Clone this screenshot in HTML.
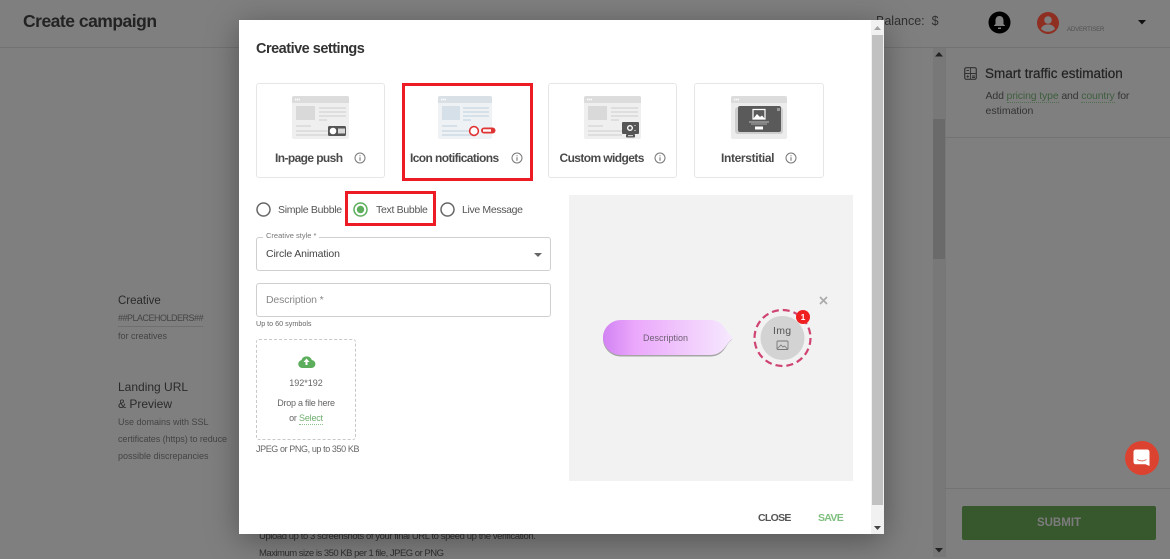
<!DOCTYPE html>
<html><head><meta charset="utf-8">
<style>
html,body{margin:0;padding:0}
body{width:1170px;height:557px;overflow:hidden;position:relative;background:#7f7f7f;font-family:"Liberation Sans",sans-serif;color:#333}
.a{position:absolute;white-space:nowrap;line-height:1}
.card{position:absolute;top:83px;width:127px;height:93px;border:1px solid #e6e6e6;border-radius:3px;background:#fff}
.lab{font-size:12px;font-weight:bold;color:#4a4a4a;letter-spacing:-.6px}
.red{position:absolute;border:3px solid #ed1c24;box-sizing:border-box}
svg{position:absolute;overflow:visible}
</style></head>
<body>
<!-- background page -->
<div class="a" style="left:23px;top:13px;font-size:17.500px;font-weight:bold;color:#232323;letter-spacing:-.5px">Create campaign</div>
<div class="a" style="left:0;top:47px;width:1170px;height:1px;background:#727272"></div>
<div class="a" style="left:876px;top:15px;font-size:12.500px;color:#303030">Balance:&nbsp; $</div>
<svg style="left:988px;top:11px" width="23" height="23" viewBox="0 0 23 23"><circle cx="11.500" cy="11.500" r="11" fill="#000"/><path d="M11.500 5c-2.800 0-4 2-4 4.500v3.500l-1.500 1.500v.5h11v-.5l-1.500-1.500v-3.500c0-2.500-1.200-4.500-4-4.500z" fill="#7f7f7f"/><rect x="10" y="16.500" width="3" height="1.500" fill="#7f7f7f"/></svg>
<svg style="left:1037px;top:12px" width="22" height="22" viewBox="0 0 22 22"><circle cx="11" cy="11" r="11" fill="#8f2f22"/><circle cx="11" cy="8" r="3.800" fill="#7f7f7f"/><path d="M4 17c1-3.500 4-4.500 7-4.500s6 1 7 4.500c-2 2-4.500 2.800-7 2.800s-5-.8-7-2.800z" fill="#7f7f7f"/></svg>
<div class="a" style="left:1067px;top:27px;font-size:6px;color:#505050;letter-spacing:-.1px">ADVERTISER</div>
<svg style="left:1138px;top:20px" width="8" height="5"><path d="M0 0h8L4 4.500z" fill="#111"/></svg>

<div class="a" style="left:933px;top:48px;width:12px;height:509px;background:#787878"></div>
<div class="a" style="left:933px;top:119px;width:12px;height:140px;background:#6a6a6a"></div>
<svg style="left:935px;top:52px" width="8" height="5"><path d="M0 4.500h8L4 0z" fill="#222"/></svg>
<svg style="left:935px;top:548px" width="8" height="5"><path d="M0 0h8L4 4.500z" fill="#222"/></svg>
<div class="a" style="left:945px;top:48px;width:1px;height:509px;background:#777"></div>
<div class="a" style="left:945px;top:137px;width:225px;height:1px;background:#737373"></div>
<div class="a" style="left:945px;top:488px;width:225px;height:1px;background:#737373"></div>

<svg style="left:964px;top:67px" width="13" height="13" viewBox="0 0 13 13"><rect x=".7" y=".7" width="11.600" height="11.600" rx="1.500" fill="none" stroke="#333" stroke-width="1.200"/><path d="M.7 6.500h11.600M6.500.7v11.600M2.500 3.500h2.500M8 9h3M8 10.500h3M2.500 9.500h2.500M3.700 8.200v2.500" stroke="#333" stroke-width=".9" fill="none"/></svg>
<div class="a" style="left:985px;top:66.500px;font-size:13.500px;color:#222;-webkit-text-stroke:.2px #222">Smart traffic estimation</div>
<div class="a" style="left:985.500px;top:90.500px;font-size:10.500px;color:#333;letter-spacing:-.14px">Add <span style="color:#3f5f3f;border-bottom:1px dotted #4f6f4f">pricing type</span> and <span style="color:#3f5f3f;border-bottom:1px dotted #4f6f4f">country</span> for</div>
<div class="a" style="left:985.500px;top:106px;font-size:10.500px;color:#333">estimation</div>

<div class="a" style="left:118px;top:295.500px;font-size:11.500px;color:#2a2a2a">Creative</div>
<div class="a" style="left:118px;top:314px;font-size:9px;color:#444;border-bottom:1px solid #6f6f6f;padding-bottom:3px;letter-spacing:-.5px">##PLACEHOLDERS##</div>
<div class="a" style="left:118px;top:331.500px;font-size:9px;color:#444">for creatives</div>
<div class="a" style="left:118px;top:381px;font-size:12px;color:#2a2a2a">Landing URL</div>
<div class="a" style="left:118px;top:398px;font-size:12px;color:#2a2a2a">&amp; Preview</div>
<div class="a" style="left:118px;top:417.500px;font-size:9px;color:#444">Use domains with SSL</div>
<div class="a" style="left:118px;top:434.500px;font-size:9px;color:#444;letter-spacing:-.07px">certificates (https) to reduce</div>
<div class="a" style="left:118px;top:451.500px;font-size:9px;color:#444">possible discrepancies</div>
<div class="a" style="left:259px;top:532px;font-size:9.500px;color:#2e2e2e;letter-spacing:-.42px">Upload up to 3 screenshots of your final URL to speed up the verification.</div>
<div class="a" style="left:259px;top:549px;font-size:9.500px;color:#2e2e2e;letter-spacing:-.5px">Maximum size is 350 KB per 1 file, JPEG or PNG</div>
<div class="a" style="left:962px;top:506px;width:194px;height:34px;background:#37572d;border-radius:2px;text-align:center;line-height:34px;font-size:11.500px;font-weight:bold;color:#7c7c7c">SUBMIT</div>
<div class="a" style="left:1125px;top:441px;width:34px;height:34px;border-radius:50%;background:#db4330"></div>
<svg style="left:1133px;top:449px" width="18" height="18" viewBox="0 0 18 18"><path d="M3 0.500h11c1.500 0 2.500 1 2.500 2.500v14l-4-1.800H3c-1.500 0-2.500-1-2.500-2.500V3C.5 1.500 1.500.5 3 .5z" fill="#fff"/><path d="M4 10.500c3 1.800 6.500 1.800 9.500 0" stroke="#db6a5c" stroke-width="1" fill="none"/></svg>

<!-- modal shadow + modal -->
<div class="a" style="left:239px;top:20px;width:645px;height:514px;background:#fff;box-shadow:0 6px 30px rgba(0,0,0,.35)"></div>
<div class="a" style="left:871px;top:20px;width:13px;height:514px;background:#f1f1f1"></div>
<div class="a" style="left:872px;top:35px;width:11px;height:470px;background:#c1c1c1"></div>
<svg style="left:874px;top:26px" width="7" height="4"><path d="M0 4h7L3.500 0z" fill="#a3a3a3"/></svg>
<svg style="left:874px;top:526px" width="7" height="4"><path d="M0 0h7L3.500 4z" fill="#444"/></svg>

<div class="a" style="left:256px;top:41.500px;font-size:14.500px;font-weight:bold;color:#333;letter-spacing:-.5px">Creative settings</div>

<!-- cards -->
<div class="card" style="left:256px"></div>
<div class="card" style="left:402px;border-color:#fff"></div>
<div class="card" style="left:548px"></div>
<div class="card" style="left:694px;width:128px"></div>
<div class="red" style="left:402px;top:83px;width:131px;height:98px"></div>

<svg style="left:292px;top:96px" width="57" height="43" viewBox="0 0 57 43"><rect width="57" height="43" rx="2" fill="#efefef"/><path d="M0 7V2a2 2 0 0 1 2-2h53a2 2 0 0 1 2 2v5z" fill="#dcdcdc"/><path d="M3 3.500h5" stroke="#fff" stroke-width="1.400" stroke-dasharray="1.400 .6"/><rect x="4" y="10" width="19" height="14" fill="#d9d9d9"/><path d="M27 12h27M27 16h27M27 20h27M27 24h8M4 30h15M4 35h34M4 39h34" stroke="#dcdcdc" stroke-width="1.800"/><rect x="36" y="30" width="18" height="10" rx="1.500" fill="#555"/><circle cx="41" cy="35" r="3.300" fill="#fff"/><rect x="46" y="32.500" width="7" height="5" fill="#d8d8d8"/></svg>

<svg style="left:438px;top:96px" width="60" height="43" viewBox="0 0 60 43"><rect width="54" height="43" rx="2" fill="#eff2f5"/><path d="M0 7V2a2 2 0 0 1 2-2h50a2 2 0 0 1 2 2v5z" fill="#d9e1e7"/><path d="M3 3.500h5" stroke="#fff" stroke-width="1.400" stroke-dasharray="1.400 .6"/><rect x="4" y="10" width="18" height="14" fill="#d6e0e9"/><path d="M25 12h26M25 16h26M25 20h26M25 24h8M4 30h15M4 35h32M4 39h32" stroke="#d2dde6" stroke-width="1.800"/><circle cx="36" cy="35" r="4.400" fill="#fff" stroke="#e03535" stroke-width="1.600"/><rect x="43" y="31.500" width="14.500" height="6" rx="3" fill="#e03535"/><rect x="45" y="33.300" width="8" height="2.400" fill="#fff"/></svg>

<svg style="left:584px;top:96px" width="57" height="46" viewBox="0 0 57 46"><rect width="57" height="43" rx="2" fill="#efefef"/><path d="M0 7V2a2 2 0 0 1 2-2h53a2 2 0 0 1 2 2v5z" fill="#dcdcdc"/><path d="M3 3.500h5" stroke="#fff" stroke-width="1.400" stroke-dasharray="1.400 .6"/><rect x="4" y="10" width="19" height="14" fill="#d9d9d9"/><path d="M27 12h27M27 16h27M27 20h27M27 24h8M4 30h15M4 35h34M4 39h34" stroke="#dcdcdc" stroke-width="1.800"/><rect x="38" y="26" width="17" height="12" rx="1" fill="#555"/><circle cx="46" cy="32" r="2.300" fill="none" stroke="#fff" stroke-width="1.400"/><path d="M51 29v1M51 34v1" stroke="#ddd" stroke-width="1.200"/><rect x="42" y="38" width="9" height="3.500" rx="1" fill="#555"/><rect x="44" y="39" width="5" height="1.200" fill="#ccc"/></svg>

<svg style="left:731px;top:96px" width="56" height="43" viewBox="0 0 56 43"><rect width="56" height="43" rx="2" fill="#ececec"/><path d="M0 7V2a2 2 0 0 1 2-2h52a2 2 0 0 1 2 2v5z" fill="#dcdcdc"/><path d="M3 3.500h5" stroke="#fff" stroke-width="1.400" stroke-dasharray="1.400 .6"/><rect x="4" y="11" width="48" height="27" rx="3" fill="#aaa" opacity=".45"/><rect x="7" y="10" width="43" height="26" rx="2" fill="#5a5a5a"/><rect x="46" y="12" width="3" height="3" fill="#999"/><path d="M22 13.500h12v9.500H22z" fill="none" stroke="#fff" stroke-width="1.200"/><path d="M22 23l4-5 3 3 2-1.500 3 3.500z" fill="#fff"/><path d="M18 26h20" stroke="#aaa" stroke-width="1.200"/><path d="M20 28h16" stroke="#aaa" stroke-width="1"/><rect x="24" y="30.500" width="8" height="3" fill="#fff"/></svg>

<div class="a lab" style="left:275px;top:152px">In-page push</div>
<div class="a lab" style="left:410px;top:152px">Icon notifications</div>
<div class="a lab" style="left:559.500px;top:152px">Custom widgets</div>
<div class="a lab" style="left:721px;top:152px;letter-spacing:-.35px">Interstitial</div>
<svg style="left:354px;top:152px" width="12" height="12" viewBox="0 0 12 12"><circle cx="6" cy="6" r="5" fill="none" stroke="#777" stroke-width="1"/><path d="M6 5.200v3.500M6 3.200v1" stroke="#777" stroke-width="1.100"/></svg>
<svg style="left:511px;top:152px" width="12" height="12" viewBox="0 0 12 12"><circle cx="6" cy="6" r="5" fill="none" stroke="#777" stroke-width="1"/><path d="M6 5.200v3.500M6 3.200v1" stroke="#777" stroke-width="1.100"/></svg>
<svg style="left:654px;top:152px" width="12" height="12" viewBox="0 0 12 12"><circle cx="6" cy="6" r="5" fill="none" stroke="#777" stroke-width="1"/><path d="M6 5.200v3.500M6 3.200v1" stroke="#777" stroke-width="1.100"/></svg>
<svg style="left:785px;top:152px" width="12" height="12" viewBox="0 0 12 12"><circle cx="6" cy="6" r="5" fill="none" stroke="#777" stroke-width="1"/><path d="M6 5.200v3.500M6 3.200v1" stroke="#777" stroke-width="1.100"/></svg>

<!-- radios -->
<svg style="left:256px;top:202px" width="15" height="15"><circle cx="7.500" cy="7.500" r="6.500" fill="none" stroke="#666" stroke-width="1.500"/></svg>
<div class="a" style="left:278px;top:204.500px;font-size:10.500px;color:#555;letter-spacing:-.3px">Simple Bubble</div>
<div class="red" style="left:345px;top:191px;width:91px;height:35px"></div>
<svg style="left:353px;top:202px" width="15" height="15"><circle cx="7.500" cy="7.500" r="6.500" fill="none" stroke="#5cae5c" stroke-width="1.500"/><circle cx="7.500" cy="7.500" r="3.700" fill="#5cae5c"/></svg>
<div class="a" style="left:376px;top:204.500px;font-size:10.500px;color:#555;letter-spacing:-.3px">Text Bubble</div>
<svg style="left:440px;top:202px" width="15" height="15"><circle cx="7.500" cy="7.500" r="6.500" fill="none" stroke="#666" stroke-width="1.500"/></svg>
<div class="a" style="left:462px;top:204.500px;font-size:10.500px;color:#555;letter-spacing:-.35px">Live Message</div>

<!-- select -->
<div class="a" style="left:256px;top:237px;width:295px;height:34px;box-sizing:border-box;border:1px solid #cfcfcf;border-radius:3px"></div>
<div class="a" style="left:263px;top:232px;background:#fff;padding:0 3px;font-size:7.500px;color:#777">Creative style *</div>
<div class="a" style="left:266px;top:248.500px;font-size:10.500px;color:#444;letter-spacing:-.13px">Circle Animation</div>
<svg style="left:534px;top:253px" width="8" height="4"><path d="M0 0h8L4 4z" fill="#666"/></svg>
<!-- description -->
<div class="a" style="left:256px;top:283px;width:295px;height:34px;box-sizing:border-box;border:1px solid #cfcfcf;border-radius:3px"></div>
<div class="a" style="left:266px;top:295px;font-size:10.500px;color:#888;letter-spacing:-.15px">Description *</div>
<div class="a" style="left:256px;top:320px;font-size:7.200px;color:#666">Up to 60 symbols</div>

<!-- upload -->
<div class="a" style="left:256px;top:339px;width:100px;height:101px;box-sizing:border-box;border:1px dashed #c8c8c8;border-radius:3px"></div>
<svg style="left:298px;top:355px" width="17" height="13" viewBox="0 0 17 13"><path d="M4 13a4 4 0 0 1-.6-7.900A5.500 5.500 0 0 1 13.800 5a4 4 0 0 1-.8 8z" fill="#5cae5c"/><path d="M8.500 3.500L5.500 7h2v3h2V7h2z" fill="#fff"/></svg>
<div class="a" style="left:256px;top:379px;width:100px;text-align:center;font-size:9px;color:#666">192*192</div>
<div class="a" style="left:256px;top:399px;width:100px;text-align:center;font-size:9px;color:#666;letter-spacing:-.25px">Drop a file here</div>
<div class="a" style="left:256px;top:414px;width:100px;text-align:center;font-size:9px;color:#666;letter-spacing:-.2px">or <span style="color:#6fae6f;border-bottom:1px dotted #8fc28f;padding-bottom:1px">Select</span></div>
<div class="a" style="left:256px;top:445px;font-size:9px;color:#666;letter-spacing:-.4px">JPEG or PNG, up to 350 KB</div>

<!-- preview -->
<div class="a" style="left:569px;top:195px;width:284px;height:286px;background:#f2f2f2"></div>
<svg style="left:819px;top:296px" width="9" height="9"><path d="M1 1l7 7M8 1L1 8" stroke="#aaa" stroke-width="1.600"/></svg>
<svg style="left:600px;top:318px;overflow:visible" width="136" height="42" viewBox="0 0 136 42">
<defs><linearGradient id="g" x1="0" x2="1"><stop offset="0" stop-color="#d283f3"/><stop offset=".25" stop-color="#eba8fb"/><stop offset="1" stop-color="#f6e9fe"/></linearGradient></defs>
<path d="M21 2H110C120 2 124 8 128 15L132 20L128 24C124 31 120 37 110 37H21C11 37 3 29 3 19.500S11 2 21 2z" fill="#a5a5a5" transform="translate(0,1.500)"/>
<path d="M21 2H110C120 2 124 8 128 15L133 20L128 25C124 31 120 37 110 37H21C11 37 3 29 3 19.500S11 2 21 2z" fill="url(#g)"/></svg>
<div class="a" style="left:643px;top:333.500px;font-size:9px;color:#6c5f72">Description</div>
<svg style="left:752px;top:308px" width="60" height="60" viewBox="0 0 60 60"><circle cx="30.500" cy="30" r="28" fill="none" stroke="#cf4470" stroke-width="2.200" stroke-dasharray="7 4"/><circle cx="30.500" cy="30" r="22" fill="#d3d3d3"/><rect x="25" y="33" width="11" height="8.500" rx="1" fill="none" stroke="#777" stroke-width=".9"/><path d="M25.500 40.500l3.500-3.500 2 2 1.500-1 3 3" fill="none" stroke="#777" stroke-width=".8"/><circle cx="51" cy="9" r="7" fill="#ef1f1f"/></svg>
<div class="a" style="left:773px;top:326px;font-size:10.500px;color:#555;letter-spacing:.3px">Img</div>
<div class="a" style="left:800px;top:312.500px;width:6px;text-align:center;font-size:8.500px;font-weight:bold;color:#fff">1</div>

<div class="a" style="left:758px;top:513px;font-size:10.500px;font-weight:bold;color:#555;letter-spacing:-.7px">CLOSE</div>
<div class="a" style="left:818px;top:513px;font-size:10.500px;font-weight:bold;color:#7fbf7f;letter-spacing:-.7px">SAVE</div>
</body></html>
